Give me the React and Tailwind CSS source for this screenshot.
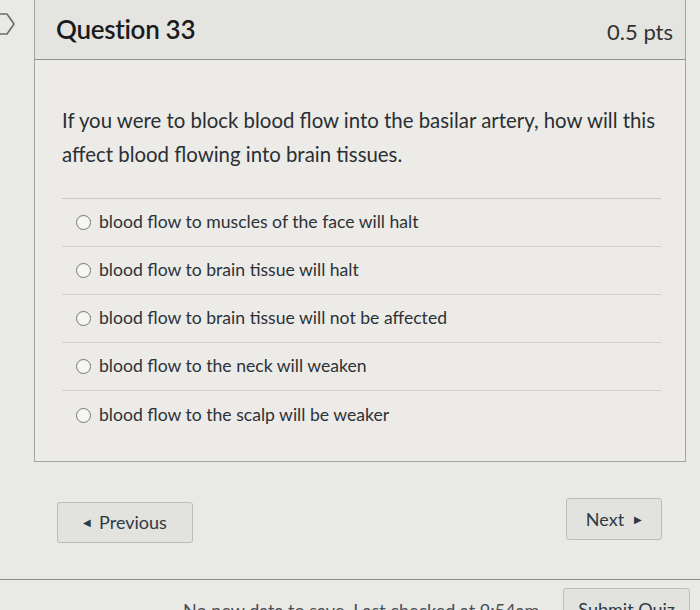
import React from "react";

const answers = [
  "blood flow to muscles of the face will halt",
  "blood flow to brain tissue will halt",
  "blood flow to brain tissue will not be affected",
  "blood flow to the neck will weaken",
  "blood flow to the scalp will be weaker",
];

const App = () => {
  return (
    <div className="w-[700px] h-[610px] overflow-hidden bg-[#e9e9e6] text-[#2d3b45] font-['Lato','Noto_Sans',sans-serif]">
      {/* Question panel */}
      <div className="flex">
        <div className="w-[34px] pt-[13px]">
          <svg width="16" height="22" viewBox="0 0 16 22" fill="none">
            <path d="M-2 1 H7 L14 11 L7 21 H-2" stroke="#6b6b6b" strokeWidth="1.6" strokeLinejoin="round" />
          </svg>
        </div>
        <div className="w-[652px] border-x border-b border-[#a3a3a0] bg-[#ecebe8]">
          <div className="h-[60px] flex items-center justify-between pl-[21px] pr-[12px] border-b border-[#8f8f8c] bg-[#e4e4e1]">
            <h2 className="text-[26px] font-semibold text-[#1b1b1b] tracking-[-0.3px]">Question 33</h2>
            <span className="text-[22px] text-[#333] mt-[3px]">0.5 pts</span>
          </div>

          <div className="pl-[27px] pr-[24px] pt-[43px] pb-[22px]">
            <p className="text-[20.4px] leading-[34px] text-[#2a2f33] pb-[27px] border-b border-[#c9c9c6]">
              If you were to block blood flow into the basilar artery, how will this affect blood flowing into brain tissues.
            </p>
            {answers.map((a, i) => (
              <div
                key={a}
                className={`h-[48px] flex items-center gap-[8px] pl-[14px] ${i < answers.length - 1 ? "border-b border-[#cfcfcc]" : ""}`}
              >
                <span className="w-[15px] h-[15px] rounded-full border-[1.5px] border-[#767676] bg-[#f6f6f4]" />
                <span className="text-[17.6px] text-[#2d3238]">{a}</span>
              </div>
            ))}
          </div>
        </div>
      </div>

      {/* Prev / Next */}
      <div className="flex items-start justify-between pl-[57px] pr-[38px] mt-[36px]">
        <button className="mt-[4px] w-[136px] h-[41px] flex items-center justify-center gap-[8px] rounded-[3px] border border-[#bcbcb9] bg-[#e2e2df] text-[18px] text-[#2d3b45]">
          <span className="text-[10px]">◀</span>
          Previous
        </button>
        <button className="w-[96px] h-[42px] flex items-center justify-center gap-[10px] rounded-[3px] border border-[#bcbcb9] bg-[#e2e2df] text-[18px] text-[#2d3b45]">
          Next
          <span className="text-[10px]">▶</span>
        </button>
      </div>

      {/* Footer */}
      <div className="mt-[36px] border-t border-[#8a8a87] flex items-start justify-end pr-[10px] pt-[8px]">
        <span className="mt-[9px] mr-[24px] text-[18px] text-[#4a4f55]">No new data to save. Last checked at 9:54am</span>
        <button className="h-[42px] px-[14px] rounded-[3px] border border-[#bcbcb9] bg-[#e2e2df] text-[18px] text-[#2d3b45]">
          Submit Quiz
        </button>
      </div>
    </div>
  );
};

export default App;
